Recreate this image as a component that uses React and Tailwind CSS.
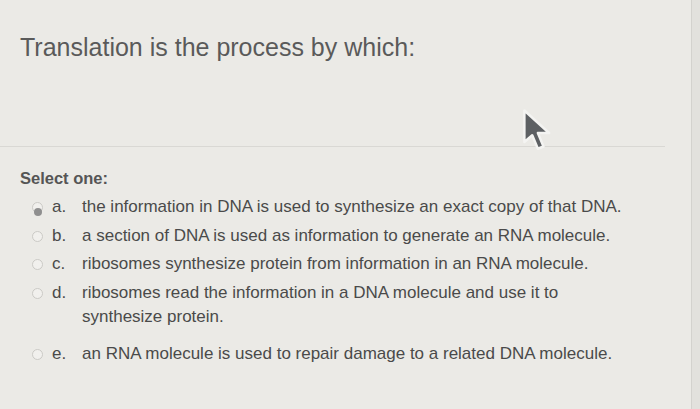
import React from "react";

const options = [
  { letter: "a.", text: ["the information in DNA is used to synthesize an exact copy of that DNA."], selected: true },
  { letter: "b.", text: ["a section of DNA is used as information to generate an RNA molecule."] },
  { letter: "c.", text: ["ribosomes synthesize protein from information in an RNA molecule."] },
  { letter: "d.", text: ["ribosomes read the information in a DNA molecule and use it to", "synthesize protein."] },
  { letter: "e.", text: ["an RNA molecule is used to repair damage to a related DNA molecule."], gap: true },
];

function Radio({ selected }) {
  return (
    <span className="relative mt-[9px] block h-[11px] w-[11px] shrink-0 rounded-full border border-[#cbcac6] bg-[#f1f0ed]">
      {selected && (
        <span className="absolute left-[1px] top-[5px] h-[8px] w-[8px] rounded-full bg-[#8f8f8f]" />
      )}
    </span>
  );
}

function Cursor() {
  return (
    <svg className="absolute left-[521px] top-[108px]" width="36" height="50" viewBox="0 0 32 44">
      <path
        d="M3 2 L3 30 L10 24 L15 36 L20 34 L15 22 L25 22 Z"
        fill="#5d6063"
        stroke="#f4f4f2"
        strokeWidth="2.2"
        strokeLinejoin="round"
      />
    </svg>
  );
}

export default function App() {
  return (
    <div className="relative h-[409px] w-[700px] overflow-hidden bg-[#ebeae6] font-['Liberation_Sans',Arial,sans-serif] text-[#4a4a4a]">
      <div className="absolute right-0 top-0 h-full w-[9px] border-l border-[#d3d2ce] bg-[#e2e1dd]" />
      <div className="w-[665px] border-b border-[#d9d8d4] pl-[20px] pt-[33px] pb-[85px]">
        <h1 className="text-[25px] leading-[28px] text-[#5a5a5a]">Translation is the process by which:</h1>
      </div>
      <div className="pl-[20px] pt-[21px]">
        <p className="text-[16.5px] font-bold leading-[20px] text-[#555]">Select one:</p>
        <div className="mt-[5px] flex flex-col">
          {options.map((o) => (
            <div key={o.letter} className={`flex pl-[12px] ${o.gap ? "mt-[8px]" : ""}`}>
              <Radio selected={o.selected} />
              <span className="ml-[9px] w-[30px] text-[17px] leading-[28.5px]">{o.letter}</span>
              <div className="text-[17px] leading-[28.5px]">
                {o.text.map((t, i) => (
                  <div key={i} className={i > 0 ? "-mt-[4px]" : ""}>{t}</div>
                ))}
              </div>
            </div>
          ))}
        </div>
      </div>
      <Cursor />
    </div>
  );
}
